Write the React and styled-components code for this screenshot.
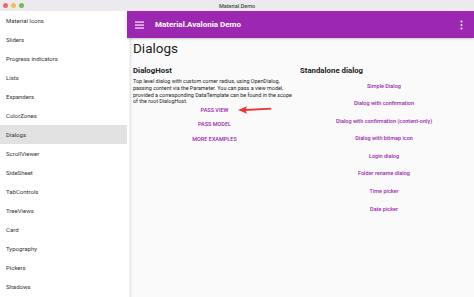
import React from "react";
import styled, { createGlobalStyle } from "styled-components";

const GlobalStyle = createGlobalStyle`
  html, body {
    margin: 0;
    padding: 0;
    width: 474px;
    height: 297px;
    overflow: hidden;
    font-family: Roboto, "Liberation Sans", sans-serif;
  }
  * { box-sizing: border-box; }
`;

const navItems = [
  "Material Icons", "Sliders", "Progress indicators", "Lists", "Expanders",
  "ColorZones", "Dialogs", "ScrollViewer", "SideSheet", "TabControls",
  "TreeViews", "Card", "Typography", "Pickers", "Shadows",
];

const standalone = [
  "Simple Dialog",
  "Dialog with confirmation",
  "Dialog with confirmation (content-only)",
  "Dialog with bitmap icon",
  "Login dialog",
  "Folder rename dialog",
  "Time picker",
  "Date picker",
];

const App = () => {
  return (
    <Window>
      <GlobalStyle />
      <TitleBar>
        <Lights>
          <Light color="#ee6a5f" />
          <Light color="#f5bd4f" />
          <Light color="#61c454" />
        </Lights>
        <WindowTitle>Material.Demo</WindowTitle>
      </TitleBar>
      <Body>
        <Sidebar>
          {navItems.map((item) => (
            <NavItem key={item} active={item === "Dialogs"}>{item}</NavItem>
          ))}
        </Sidebar>
        <Main>
          <AppBar>
            <svg width="9" height="8" viewBox="0 0 9 8">
              <rect x="0" y="0.5" width="9" height="1.1" fill="#fff" />
              <rect x="0" y="3.5" width="9" height="1.1" fill="#fff" />
              <rect x="0" y="6.5" width="9" height="1.1" fill="#fff" />
            </svg>
            <AppTitle>Material.Avalonia Demo</AppTitle>
            <svg width="3" height="10" viewBox="0 0 3 10">
              <circle cx="1.5" cy="1.5" r="1" fill="#fff" />
              <circle cx="1.5" cy="5" r="1" fill="#fff" />
              <circle cx="1.5" cy="8.5" r="1" fill="#fff" />
            </svg>
          </AppBar>
          <Content>
            <PageTitle>Dialogs</PageTitle>
            <Columns>
              <Column>
                <SectionTitle>DialogHost</SectionTitle>
                <Description>
                  Top level dialog with custom corner radius, using OpenDialog,
                  passing content via the Parameter. You can pass a view model,
                  provided a corresponding DataTemplate can be found in the scope
                  of the root DialogHost.
                </Description>
                <ButtonList gap={14.5}>
                  <ArrowRow>
                    <FlatButton>PASS VIEW</FlatButton>
                    <Arrow width="34" height="8" viewBox="0 0 34 8">
                      <path d="M7 3 L33 1.8 L33.5 3.6 L7 5 Z" fill="#e53935" />
                      <path d="M0 4 L9 0.3 L7.5 4 L9 7.7 Z" fill="#e53935" />
                    </Arrow>
                  </ArrowRow>
                  <FlatButton>PASS MODEL</FlatButton>
                  <FlatButton>MORE EXAMPLES</FlatButton>
                </ButtonList>
              </Column>
              <Column>
                <SectionTitle>Standalone dialog</SectionTitle>
                <ButtonList gap={17.6} top={6}>
                  {standalone.map((label) => (
                    <FlatButton key={label}>{label}</FlatButton>
                  ))}
                </ButtonList>
              </Column>
            </Columns>
          </Content>
        </Main>
      </Body>
    </Window>
  );
};

const Window = styled.div`
  width: 474px;
  height: 297px;
  display: flex;
  flex-direction: column;
  background: #fafafa;
`;

const TitleBar = styled.div`
  height: 11px;
  flex-shrink: 0;
  background: #eceaee;
  display: flex;
  align-items: center;
  position: relative;
`;

const Lights = styled.div`
  display: flex;
  gap: 3px;
  padding-left: 3px;
`;

const Light = styled.span`
  width: 5px;
  height: 5px;
  border-radius: 50%;
  background: ${(p) => p.color};
`;

const WindowTitle = styled.div`
  position: absolute;
  left: 0;
  right: 0;
  text-align: center;
  font-size: 5.5px;
  font-weight: 500;
  color: #4a4a4a;
`;

const Body = styled.div`
  flex: 1;
  display: flex;
  min-height: 0;
`;

const Sidebar = styled.div`
  width: 127px;
  flex-shrink: 0;
  background: #fff;
  display: flex;
  flex-direction: column;
  overflow: hidden;
`;

const NavItem = styled.div`
  height: 19px;
  flex-shrink: 0;
  display: flex;
  align-items: center;
  padding-left: 6px;
  font-size: 6px;
  color: #333;
  background: ${(p) => (p.active ? "#e2e2e2" : "transparent")};
`;

const Main = styled.div`
  flex: 1;
  display: flex;
  flex-direction: column;
  min-width: 0;
`;

const AppBar = styled.div`
  height: 27px;
  flex-shrink: 0;
  background: #9c27b0;
  display: flex;
  align-items: center;
  padding: 0 11px 0 8px;
  box-shadow: 0 1px 2px rgba(0, 0, 0, 0.2);
  color: #fff;
  position: relative;
  z-index: 1;
`;

const AppTitle = styled.div`
  flex: 1;
  margin-left: 11px;
  font-size: 8px;
  font-weight: 700;
`;

const Content = styled.div`
  flex: 1;
  padding: 2px 6px 0 6px;
  background: linear-gradient(to right, #fff 0, #fff 2px, #e4e4e4 3px, #f6f6f6 5px, #fafafa 6px);
`;

const PageTitle = styled.h1`
  margin: 0;
  font-size: 13.5px;
  font-weight: 400;
  color: #222;
  line-height: 16px;
`;

const Columns = styled.div`
  display: grid;
  grid-template-columns: 163px 1fr;
  gap: 4px;
  margin-top: 10px;
`;

const Column = styled.div`
  display: flex;
  flex-direction: column;
`;

const SectionTitle = styled.h2`
  margin: 0;
  font-size: 7.8px;
  font-weight: 700;
  color: #222;
  line-height: 10px;
`;

const Description = styled.p`
  margin: 2px 0 0;
  font-size: 5.4px;
  line-height: 6.8px;
  color: #222;
`;

const ButtonList = styled.div`
  display: flex;
  flex-direction: column;
  align-items: center;
  gap: ${(p) => p.gap - 7}px;
  margin-top: ${(p) => p.top || 1}px;
`;

const ArrowRow = styled.div`
  position: relative;
`;

const Arrow = styled.svg`
  position: absolute;
  left: calc(100% + 10px);
  top: -0.5px;
`;

const FlatButton = styled.div`
  height: 7px;
  display: flex;
  align-items: center;
  font-size: 5.5px;
  font-weight: 500;
  color: #9c27b0;
  white-space: nowrap;
`;

export default App;
